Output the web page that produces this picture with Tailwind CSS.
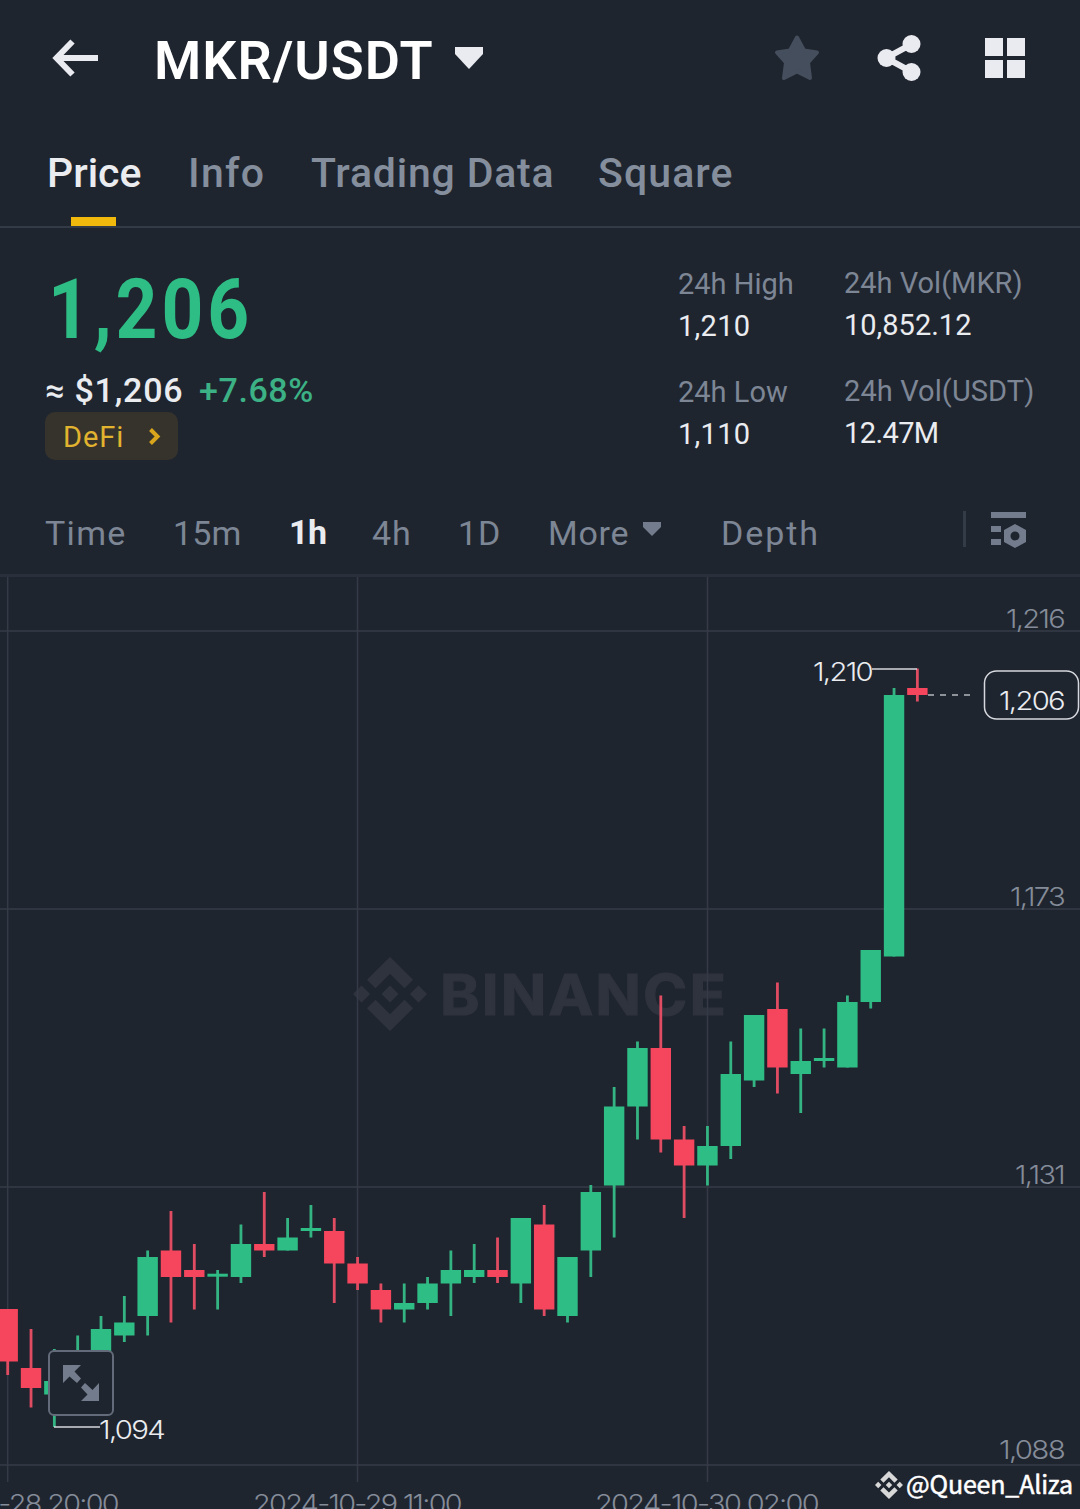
<!DOCTYPE html>
<html lang="en">
<head>
    <meta charset="UTF-8">
    <meta name="viewport" content="width=device-width, initial-scale=1.0">
    <title>MKR/USDT</title>
    <script src="https://cdn.jsdelivr.net/npm/@tailwindcss/browser@4"></script>
</head>
<body class="bg-[#1f252f] overflow-hidden">
    <div class="w-[1080px] h-[1509px] overflow-hidden flex flex-col font-['Roboto',sans-serif] text-[#eaecef] whitespace-nowrap">

        <!-- Header -->
        <header class="h-[120px] shrink-0 flex items-center pl-[52px] pr-[55px]">
            <svg class="w-[46px] h-[38px] -mt-1" viewBox="0 0 46 38" fill="none" stroke="#eaebf0" stroke-width="6">
                <path d="M4 19H46M20.5 2.5L4.5 19L20.5 35.5" />
            </svg>
            <h1 class="ml-[56px] w-[301px] pt-px text-[54px] leading-[120px] font-semibold tracking-[1px] text-white">MKR/USDT</h1>
            <svg class="w-7 h-[22px] -mt-1" viewBox="0 0 28 22" fill="#eaebf0">
                <path d="M0 0H28V7L14 22L0 7Z" />
            </svg>
            <div class="ml-auto flex items-center -mt-1">
                <svg class="w-[46px] h-[48px]" viewBox="0 0 46 48" fill="#454e5d" stroke="#454e5d" stroke-width="4" stroke-linejoin="round">
                    <path d="M23 3.5L30 16.5L43 18.5L34 28.5L36 44L23 37.5L10 44L12 28.5L3 18.5L16 16.5Z" />
                </svg>
                <svg class="ml-[57px] w-[44px] h-[48px]" viewBox="0 0 44 48" fill="#eaebf0" stroke="#eaebf0">
                    <path d="M35 10L9 24L35 38" fill="none" stroke-width="6" />
                    <circle cx="9.5" cy="24" r="9" stroke="none" />
                    <circle cx="34.5" cy="10" r="9" stroke="none" />
                    <circle cx="34.5" cy="38" r="9" stroke="none" />
                </svg>
                <div class="ml-[64px] grid grid-cols-2 gap-1">
                    <i class="w-[18px] h-[18px] bg-[#eaebf0]"></i>
                    <i class="w-[18px] h-[18px] bg-[#eaebf0]"></i>
                    <i class="w-[18px] h-[18px] bg-[#eaebf0]"></i>
                    <i class="w-[18px] h-[18px] bg-[#eaebf0]"></i>
                </div>
            </div>
        </header>

        <!-- Tabs -->
        <nav class="h-[108px] shrink-0 flex pl-[47px] border-b-2 border-[#333b47] text-[41px] leading-[107px] font-medium text-[#848e9c]">
            <div class="relative w-[141px] text-[#eaecef]">Price
                <span class="absolute left-6 bottom-0 w-[45px] h-[9px] bg-[#f0b90b]"></span>
            </div>
            <div class="w-[123px] tracking-[1.3px]">Info</div>
            <div class="w-[287px] tracking-[0.8px]">Trading Data</div>
            <div class="tracking-[1.1px]">Square</div>
        </nav>

        <!-- Price summary -->
        <section class="h-[262px] shrink-0 flex pl-[45px]">
            <div class="w-[633px] pt-[42px]">
                <div class="ml-[3px] origin-left scale-x-[0.88] text-[83px] leading-[80px] font-bold tracking-[4.4px] text-[#2ebd85]">1,206</div>
                <div class="flex mt-[20px] text-[34px] leading-[40px] font-medium">
                    <span class="w-[154px] tracking-[0.8px]">≈ $1,206</span>
                    <span class="tracking-[0.6px] text-[#3cb185]">+7.68%</span>
                </div>
                <div class="mt-[2px] w-[133px] h-12 rounded-[10px] bg-[#35332b] flex items-center pl-[18px] text-[29px] text-[#e2b32f]">
                    <span class="w-[86px] pt-[3px] tracking-[0.9px]">DeFi</span>
                    <svg class="w-3 h-[17px]" viewBox="0 0 12 17" fill="none" stroke="#d9a51c" stroke-width="4">
                        <path d="M1.5 1.5L8.5 8.5L1.5 15.5" />
                    </svg>
                </div>
            </div>
            <div class="w-[166px] pt-[35px] text-[29px] leading-[42px]">
                <div class="text-[#7d8695]">24h High</div>
                <div class="tracking-[0.3px]">1,210</div>
                <div class="mt-[24px] text-[#7d8695]">24h Low</div>
                <div class="tracking-[0.3px]">1,110</div>
            </div>
            <div class="pt-[34px] text-[29px] leading-[42px]">
                <div class="text-[#7d8695]">24h Vol(MKR)</div>
                <div>10,852.12</div>
                <div class="mt-[24px] tracking-[0.1px] text-[#7d8695]">24h Vol(USDT)</div>
                <div class="tracking-[-0.6px]">12.47M</div>
            </div>
        </section>

        <!-- Intervals -->
        <nav class="h-[87px] shrink-0 flex pl-[45px] border-b-[3px] border-[#29303b] text-[34px] leading-[86px] tracking-[1px] text-[#7d8695]">
            <div class="w-[128px] tracking-[1.3px]">Time</div>
            <div class="w-[116px] tracking-[0.2px]">15m</div>
            <div class="w-[83px] -mt-px font-bold tracking-[-0.5px] text-[#eaecef]">1h</div>
            <div class="w-[86px]">4h</div>
            <div class="w-[90px]">1D</div>
            <div class="w-[95px] tracking-[0.7px]">More</div>
            <svg class="w-[18px] h-[14px] mt-[32px]" viewBox="0 0 18 14" fill="#737c8d"><path d="M0 0H18V5L9 14L0 5Z" /></svg>
            <div class="ml-[60px] w-[242px] tracking-[1.9px]">Depth</div>
            <i class="w-[3px] h-9 mt-[21px] bg-[#333b47]"></i>
            <svg class="ml-[25px] mt-[22px] w-9 h-9" viewBox="0 0 36 36" fill="#737c8d">
                <path d="M0 0H35V6H0ZM0 14H10V20H0ZM0 27H10V33H0Z" />
                <path fill-rule="evenodd" d="M24 12L35 18V30L24 36L13 30V18ZM24 19.5A4.5 4.5 0 1 0 24 28.5A4.5 4.5 0 1 0 24 19.5Z" />
            </svg>
        </nav>

        <!-- Chart, in page coordinates -->
        <div class="relative w-[1080px] h-[932px] shrink-0">
            <svg class="block w-[1080px] h-[932px] font-['Inter',sans-serif] font-light text-[26px]" viewBox="0 577 1080 932">
                <defs>
                    <g id="logo">
                        <path d="M37 0L60 22.7L51.5 31.2L37 16.8L22.5 31.2L14 22.7Z" />
                        <path d="M37 74L60 51.3L51.5 42.8L37 57.2L22.5 42.8L14 51.3Z" />
                        <path d="M8.5 28.5L17 37L8.5 45.5L0 37ZM65.5 28.5L74 37L65.5 45.5L57 37ZM37 28.5L45.5 37L37 45.5L28.5 37Z" />
                    </g>
                </defs>
                <use href="#logo" transform="translate(353 957)" fill="#2f333e" />
                <text x="440" y="1014.5" textLength="288" lengthAdjust="spacingAndGlyphs" font-size="56" class="font-bold tracking-[2px]" fill="#2f333e" stroke="#2f333e" stroke-width="1.2">BINANCE</text>
                <path d="M0 631H1080M0 909H1080M0 1187H1080M0 1465H1080" stroke="#2f3641" stroke-width="2" />
                <path d="M7.7 577V1482M357.5 577V1482M707.5 577V1482" stroke="#343b47" stroke-width="1.5" />
                <g id="candles"></g>
                <path d="M872 669H917M54 1427H100" stroke="#d5d8dd" stroke-width="1.7" />
                <path d="M928 695H971" stroke="#b4b8be" stroke-width="1.7" stroke-dasharray="6 6" />
                <rect x="984.5" y="671" width="94" height="48" rx="12" fill="#1f252f" stroke="#d5d8dd" stroke-width="1.5" />
                <g class="tracking-[-1.5px]" fill="#eaecef">
                    <text x="813" y="681" textLength="59" lengthAdjust="spacingAndGlyphs">1,210</text>
                    <text x="999" y="710" textLength="65" lengthAdjust="spacingAndGlyphs">1,206</text>
                    <text x="99" y="1439" textLength="65" lengthAdjust="spacingAndGlyphs">1,094</text>
                </g>
                <g class="tracking-[-1.5px]" fill="#858c99">
                    <text x="1006" y="628" textLength="58" lengthAdjust="spacingAndGlyphs">1,216</text>
                    <text x="1010" y="906" textLength="54" lengthAdjust="spacingAndGlyphs">1,173</text>
                    <text x="1015" y="1184" textLength="49" lengthAdjust="spacingAndGlyphs">1,131</text>
                    <text x="999" y="1459" textLength="65" lengthAdjust="spacingAndGlyphs">1,088</text>
                    <text x="-103" y="1513" textLength="221" lengthAdjust="spacingAndGlyphs">2024-10-28 20:00</text>
                    <text x="253" y="1513" textLength="208" lengthAdjust="spacingAndGlyphs">2024-10-29 11:00</text>
                    <text x="595" y="1513" textLength="223" lengthAdjust="spacingAndGlyphs">2024-10-30 02:00</text>
                </g>
                <use href="#logo" transform="translate(875 1471) scale(.378)" fill="#d8d8d8" />
                <text x="906" y="1494" textLength="167" font-size="25" class="font-['Noto_Sans_CJK_SC',sans-serif] font-normal" fill="#fff" stroke="#fff" stroke-width=".5">@Queen_Aliza</text>
            </svg>
            <button class="absolute left-[48px] top-[773px] w-[66px] h-[66px] rounded-md border-2 border-[#636b7a] bg-[#1f252f] flex items-center justify-center">
                <svg class="w-9 h-9" viewBox="0 0 36 36" fill="#737c8d">
                    <path d="M0 0H18L11.5 6.5L18 13.5L14 18L6.5 11.5L0 18Z" />
                    <path d="M36 36H18L24.5 29.5L18 22.5L22 18L29.5 25L36 18Z" />
                </svg>
            </button>
        </div>
    </div>

    <script>
        // [up, high, open/close top, open/close bottom, low] as y positions
        const candles = [
            [0, 1309, 1309, 1361.5, 1375], [0, 1329, 1368, 1388, 1407.5], [1, 1349, 1381, 1394.5, 1427],
            [1, 1335.5, 1355, 1381, 1390], [1, 1316, 1329, 1355, 1360], [1, 1296, 1322.5, 1335.5, 1342],
            [1, 1250.5, 1257, 1316, 1335.5], [0, 1211, 1250.5, 1277, 1322.5], [0, 1244, 1270, 1277, 1309.5],
            [1, 1270, 1273.7, 1276.7, 1309.5], [1, 1224.5, 1244, 1277, 1283], [0, 1192, 1244, 1250.5, 1257],
            [1, 1218, 1237.5, 1250.5, 1250.5], [1, 1205, 1228, 1231, 1237.5], [0, 1218, 1231, 1263.5, 1303],
            [0, 1257, 1263.5, 1283.5, 1290], [0, 1283.5, 1290, 1309.5, 1322.5], [1, 1283.5, 1303, 1309.5, 1322.5],
            [1, 1277, 1283.5, 1303, 1309.5], [1, 1250.5, 1270, 1283.5, 1316], [1, 1244, 1270, 1277, 1283],
            [0, 1237.5, 1270, 1277, 1283], [1, 1218, 1218, 1283.5, 1303], [0, 1205, 1224.5, 1309.5, 1316],
            [1, 1257, 1257, 1316, 1322.5], [1, 1185, 1192, 1250.5, 1277], [1, 1087, 1106.5, 1185.5, 1237.5],
            [1, 1041.5, 1048, 1106.5, 1139.5], [0, 995.5, 1048, 1139.5, 1152.5], [0, 1126, 1139.5, 1165.5, 1218],
            [1, 1126, 1146, 1165.5, 1185.5], [1, 1041.5, 1074, 1146, 1159], [1, 1015, 1015, 1080.5, 1087],
            [0, 982.5, 1009, 1067.5, 1093.5], [1, 1028.5, 1061, 1074, 1113], [1, 1028.5, 1058, 1061, 1067.5],
            [1, 995.5, 1002, 1067.5, 1067.5], [1, 950, 950, 1002, 1008.5], [1, 688, 695, 956.5, 956.5],
            [0, 668.5, 688, 695, 701.5]
        ];

        document.getElementById('candles').innerHTML = candles.map(([up, high, top, bottom, low], i) => {
            const x = 7.7 + i * 23.325;
            return `<rect x="${x - 1.4}" y="${high}" width="2.8" height="${low - high}" fill="${up ? '#35b483' : '#e04c62'}" />` +
                `<rect x="${x - 10.2}" y="${top}" width="20.4" height="${bottom - top}" fill="${up ? '#2ebd85' : '#f6465d'}" />`;
        }).join('');
    </script>
</body>
</html>
